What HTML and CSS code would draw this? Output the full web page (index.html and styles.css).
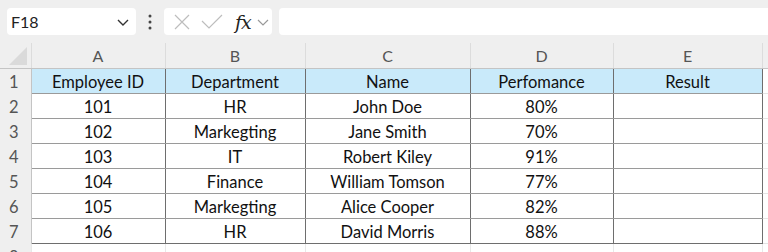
FILE: index.html
```html
<!DOCTYPE html>
<html lang="en">
<head>
  <meta charset="UTF-8">
  <title>Employees</title>
  <link rel="stylesheet" href="styles.css">
</head>
<body>
  <div class="formula-bar">
    <div class="name-box">
      <span>F18</span>
      <svg width="14" height="14" viewBox="0 0 14 14"><path d="M2 5 L7 10 L12 5" fill="none" stroke="#333" stroke-width="1.4"/></svg>
    </div>
    <div class="dots">
      <svg width="4" height="16" viewBox="0 0 4 16"><circle cx="2" cy="2" r="1.5" fill="#444"/><circle cx="2" cy="8" r="1.5" fill="#444"/><circle cx="2" cy="14" r="1.5" fill="#444"/></svg>
    </div>
    <div class="fx-box">
      <svg width="18" height="18" viewBox="0 0 18 18"><path d="M2 2 L16 16 M16 2 L2 16" stroke="#bdbdbd" stroke-width="1.2"/></svg>
      <svg width="22" height="18" viewBox="0 0 22 18"><path d="M1 8 L8 15 L21 2" fill="none" stroke="#bdbdbd" stroke-width="1.2"/></svg>
      <span class="fx">fx</span>
      <svg width="12" height="12" viewBox="0 0 12 12"><path d="M1 4 L6 9 L11 4" fill="none" stroke="#999" stroke-width="1.2"/></svg>
    </div>
    <div class="formula-input"></div>
  </div>

  <table class="sheet">
    <colgroup>
      <col class="c-num">
      <col class="c-a">
      <col class="c-b">
      <col class="c-c">
      <col class="c-d">
      <col class="c-e">
      <col class="c-f">
    </colgroup>
    <thead>
      <tr class="letters">
        <th class="corner"><span class="tri"></span></th>
        <th>A</th>
        <th>B</th>
        <th>C</th>
        <th>D</th>
        <th>E</th>
        <th class="last"></th>
      </tr>
    </thead>
    <tbody>
      <tr class="head">
        <td class="num">1</td>
        <td class="cell">Employee ID</td>
        <td class="cell">Department</td>
        <td class="cell">Name</td>
        <td class="cell">Perfomance</td>
        <td class="cell">Result</td>
        <td class="empty"></td>
      </tr>
      <tr>
        <td class="num">2</td>
        <td class="cell">101</td>
        <td class="cell">HR</td>
        <td class="cell">John Doe</td>
        <td class="cell">80%</td>
        <td class="cell"></td>
        <td class="empty"></td>
      </tr>
      <tr>
        <td class="num">3</td>
        <td class="cell">102</td>
        <td class="cell">Markegting</td>
        <td class="cell">Jane Smith</td>
        <td class="cell">70%</td>
        <td class="cell"></td>
        <td class="empty"></td>
      </tr>
      <tr>
        <td class="num">4</td>
        <td class="cell">103</td>
        <td class="cell">IT</td>
        <td class="cell">Robert Kiley</td>
        <td class="cell">91%</td>
        <td class="cell"></td>
        <td class="empty"></td>
      </tr>
      <tr>
        <td class="num">5</td>
        <td class="cell">104</td>
        <td class="cell">Finance</td>
        <td class="cell">William Tomson</td>
        <td class="cell">77%</td>
        <td class="cell"></td>
        <td class="empty"></td>
      </tr>
      <tr>
        <td class="num">6</td>
        <td class="cell">105</td>
        <td class="cell">Markegting</td>
        <td class="cell">Alice Cooper</td>
        <td class="cell">82%</td>
        <td class="cell"></td>
        <td class="empty"></td>
      </tr>
      <tr>
        <td class="num">7</td>
        <td class="cell">106</td>
        <td class="cell">HR</td>
        <td class="cell">David Morris</td>
        <td class="cell">88%</td>
        <td class="cell"></td>
        <td class="empty"></td>
      </tr>
      <tr class="blank">
        <td class="num">8</td>
        <td></td>
        <td></td>
        <td></td>
        <td></td>
        <td></td>
        <td class="empty"></td>
      </tr>
    </tbody>
  </table>
</body>
</html>
```

FILE: styles.css
```css
body {
  margin: 0;
  background: #fff;
  font-family: 'Lato', 'Noto Sans', sans-serif;
  color: #111;
  overflow: hidden;
}

.formula-bar {
  display: flex;
  align-items: center;
  height: 43px;
  padding-left: 7px;
  background: #efefef;
}

.name-box {
  display: flex;
  align-items: center;
  justify-content: space-between;
  width: 129px;
  height: 27px;
  padding: 0 6px 0 4px;
  box-sizing: border-box;
  background: #fff;
  border-radius: 4px;
  font-size: 16px;
  color: #222;
}

.dots {
  display: flex;
  align-items: center;
  width: 28px;
  justify-content: center;
}

.fx-box {
  display: flex;
  align-items: center;
  gap: 10px;
  width: 108px;
  height: 27px;
  padding-left: 9px;
  box-sizing: border-box;
  background: #fff;
  border-radius: 4px;
}

.fx-box .fx {
  font-family: 'DejaVu Serif', 'Liberation Serif', serif;
  font-style: italic;
  font-size: 19px;
  color: #222;
  margin-left: 2px;
  margin-right: -4px;
  letter-spacing: -1px;
}

.formula-input {
  flex: 1;
  height: 27px;
  margin-left: 7px;
  background: #fff;
  border-radius: 4px 0 0 4px;
}

.sheet {
  border-collapse: collapse;
  table-layout: fixed;
  width: 800px;
  font-size: 16.5px;
}

.c-num { width: 31px; }
.c-a { width: 134px; }
.c-b { width: 140px; }
.c-c { width: 165px; }
.c-d { width: 143px; }
.c-e { width: 149px; }
.c-f { width: 38px; }

.letters th {
  height: 25px;
  padding: 0;
  background: #efefef;
  font-weight: normal;
  font-size: 16px;
  color: #555;
  border-left: 1px solid #dcdcdc;
  border-bottom: 1px solid #c4c4c4;
}

.letters th.corner {
  border-left: none;
  position: relative;
}

.tri {
  position: absolute;
  right: 4px;
  bottom: 3px;
  width: 0;
  height: 0;
  border-left: 18px solid transparent;
  border-bottom: 18px solid #dadada;
}

td {
  height: 22px;
  padding: 2px 0 0;
  text-align: center;
  white-space: nowrap;
}

td.num {
  background: #efefef;
  color: #555;
  text-align: left;
  padding-left: 9px;
  border-right: 1px solid #c4c4c4;
}

td.cell {
  border: 1px solid #6e6e6e;
  border-top-color: #9a9a9a;
  border-bottom-color: #9a9a9a;
}

.head td.cell {
  background: #c9eafa;
  border-top-color: #6e6e6e;
}

tr:nth-child(7) td.cell {
  border-bottom-color: #6e6e6e;
}

td.empty {
  border-bottom: 1px solid #e4e4e4;
}

.blank td {
  border-right: 1px solid #e8e8e8;
}
```
